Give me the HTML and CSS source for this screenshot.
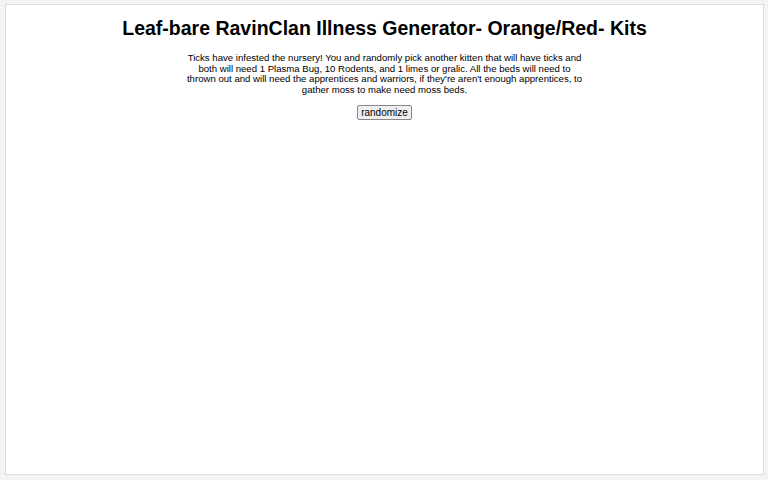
FILE: index.html
```html
<!DOCTYPE html>
<html lang="en">
<head>
  <meta charset="UTF-8">
  <title>Leaf-bare RavinClan Illness Generator</title>
  <link rel="stylesheet" href="styles.css">
</head>
<body>

  <!-- Generator panel -->
  <div class="panel">
    <h1>Leaf-bare RavinClan Illness Generator- Orange/Red- Kits</h1>

    <p id="output">Ticks have infested the nursery! You and randomly pick another kitten that will have ticks and both will need 1 Plasma Bug, 10 Rodents, and 1 limes or gralic. All the beds will need to thrown out and will need the apprentices and warriors, if they're aren't enough apprentices, to gather moss to make need moss beds.</p>

    <button class="randomize">randomize</button>
  </div>

</body>
</html>
```

FILE: styles.css
```css
* {
  box-sizing: border-box;
}

html, body {
  height: 100%;
}

body {
  margin: 0;
  padding: 4px 4px 5px 5px;
  background: #f4f4f4;
  font-family: "Liberation Sans", Arial, sans-serif;
  color: #000;
}

.panel {
  height: 100%;
  background: #fff;
  border: 1px solid #dcdcdc;
  text-align: center;
  padding-top: 12px;
}

h1 {
  font-size: 19.5px;
  font-weight: bold;
  margin: 0 0 13px;
}

#output {
  width: 398px;
  margin: 0 auto 6px;
  font-size: 9.6px;
  line-height: 10.7px;
}

.randomize {
  font-family: "Liberation Sans", Arial, sans-serif;
  font-size: 10px;
  padding: 1px 3px;
  background: #efefef;
  border: 1px solid #888;
  border-radius: 2px;
  color: #000;
}
```
